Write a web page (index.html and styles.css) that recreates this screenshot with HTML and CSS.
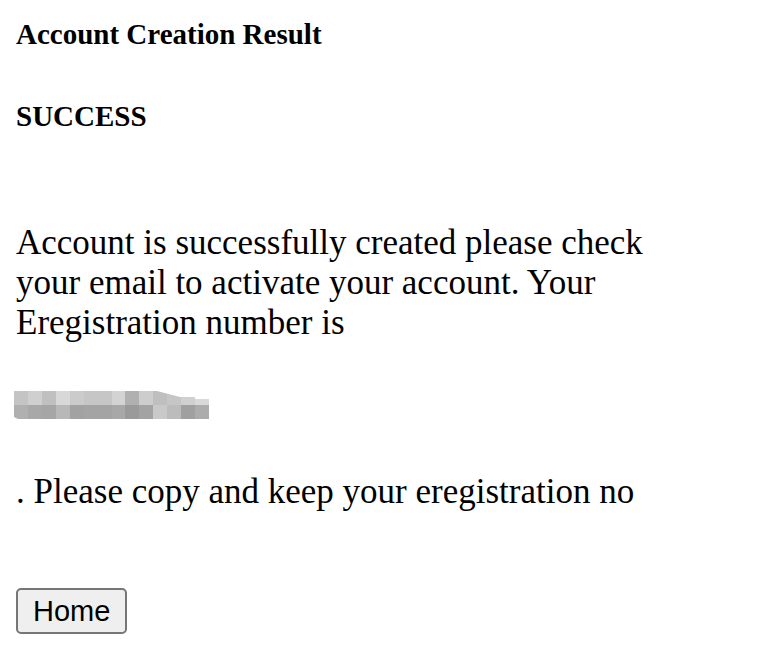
FILE: index.html
```html
<!DOCTYPE html>
<html lang="en">
<head>
<meta charset="utf-8">
<title>Account Creation Result</title>
<link rel="stylesheet" href="styles.css">
</head>
<body>
<main class="page">
  <h5 class="title">Account Creation Result</h5>
  <h5 class="status">SUCCESS</h5>
  <p class="message">Account is successfully created please check your email to activate your account. Your Eregistration number is</p>
  <div class="regno" aria-label="registration number (hidden)">
    <span class="c t1"></span><span class="c t2"></span><span class="c t3"></span><span class="c t4"></span><span class="c t5"></span><span class="c t6"></span><span class="c t6"></span><span class="c t7"></span><span class="c t8"></span><span class="c t9"></span><span class="c t10"></span><span class="c t11"></span><span class="c t12"></span><span class="c t13"></span>
    <span class="c b1"></span><span class="c b2"></span><span class="c b3"></span><span class="c b4"></span><span class="c b5"></span><span class="c b6"></span><span class="c b6"></span><span class="c b7"></span><span class="c b8"></span><span class="c b9"></span><span class="c b10"></span><span class="c b11"></span><span class="c b12"></span><span class="c b13"></span>
  </div>
  <p class="note">. Please copy and keep your eregistration no</p>
  <button class="home" type="button">Home</button>
</main>
</body>
</html>
```

FILE: styles.css
```css
html, body {
  margin: 0;
  padding: 0;
  background: #ffffff;
}

body {
  font-family: "Liberation Serif", "Times New Roman", serif;
  color: #000000;
}

.page {
  padding: 18px 16px 0 16px;
  width: 680px;
  display: flex;
  flex-direction: column;
  align-items: flex-start;
}

.title,
.status {
  font-size: 29px;
  font-weight: bold;
  margin: 0;
  line-height: normal;
}

.status {
  margin-top: 49px;
}

.message {
  font-size: 35px;
  margin: 90px 0 0 0;
  line-height: normal;
}

.regno {
  margin: 48px 0 0 -2px;
  width: 195px;
  height: 28px;
  display: grid;
  grid-template-columns: repeat(14, 1fr);
  grid-template-rows: 14px 14px;
  clip-path: polygon(0 0, 143px 0, 166px 6px, 181px 6px, 181px 8px, 195px 8px, 195px 28px, 4px 28px, 0 26px);
}

.c { display: block; }
.t1 { background: #c4c4c4; }
.t2 { background: #cfcfcf; }
.t3 { background: #c0c0c0; }
.t4 { background: #d8d8d8; }
.t5 { background: #cbcbcb; }
.t6 { background: #c6c6c6; }
.t7 { background: #d3d3d3; }
.t8 { background: #b0b0b0; }
.t9 { background: #cdcdcd; }
.t10 { background: #bfbfbf; }
.t11 { background: #c6c6c6; }
.t12 { background: #d0d0d0; }
.t13 { background: #d9d9d9; }
.b1 { background: #b0b0b0; }
.b2 { background: #a8a8a8; }
.b3 { background: #a6a6a6; }
.b4 { background: #b8b8b8; }
.b5 { background: #a2a2a2; }
.b6 { background: #a4a4a4; }
.b7 { background: #a8a8a8; }
.b8 { background: #9a9a9a; }
.b9 { background: #a3a3a3; }
.b10 { background: #c9c9c9; }
.b11 { background: #bcbcbc; }
.b12 { background: #a0a0a0; }
.b13 { background: #acacac; }

.note {
  font-size: 35px;
  margin: 53px 0 0 0;
  line-height: normal;
}

.home {
  margin-top: 76px;
  font-family: "Liberation Sans", Arial, sans-serif;
  font-size: 29px;
  color: #000000;
  background: #efefef;
  border: 2px solid #767676;
  border-radius: 5px;
  padding: 3px 15px;
  height: 46px;
  line-height: normal;
}
```
